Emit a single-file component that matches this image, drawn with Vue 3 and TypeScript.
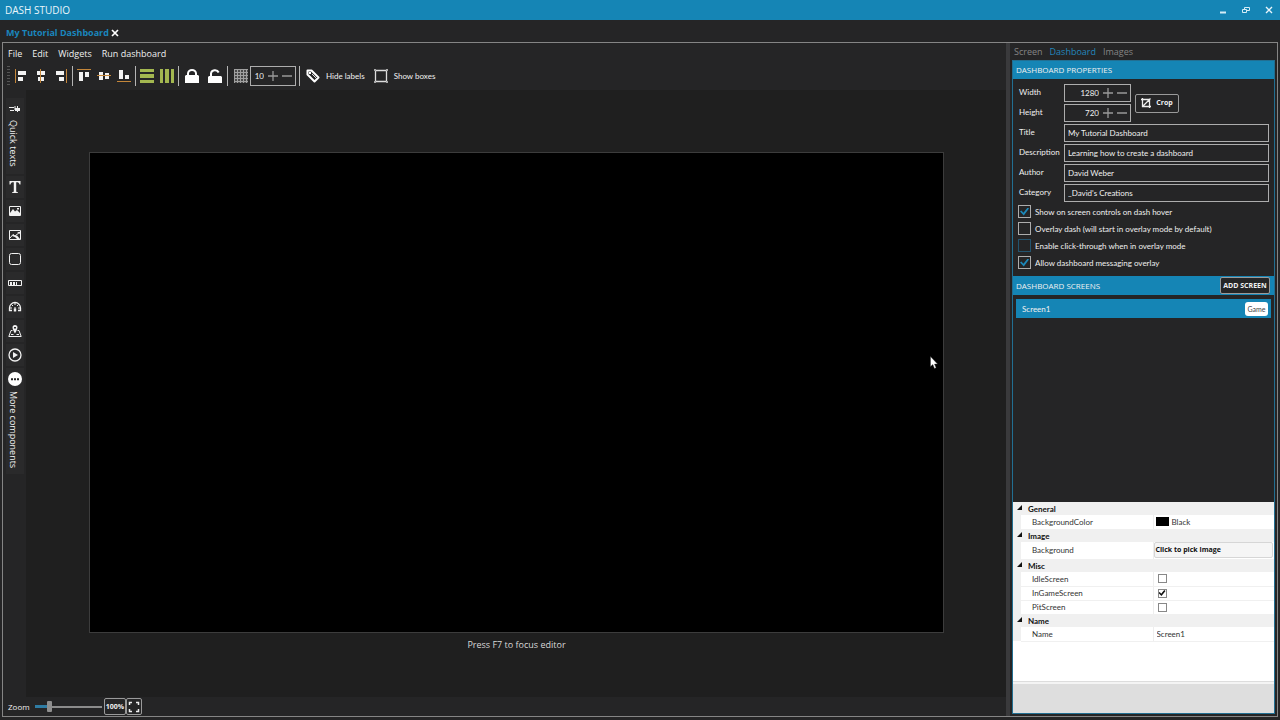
<script setup lang="ts">
import { ref } from 'vue'

interface Stroke { d: string; fill?: string; stroke?: string; width?: number }
interface Tool { label: string; shapes: Stroke[] }

const W = '#f2f2f2'
const O = '#c4863a'
const G = '#a3b750'

const alignGroups: Tool[][] = [
  [
    { label: 'Align left', shapes: [{ d: 'M1.5 0V14', stroke: O }, { d: 'M4 2h8v4H4zM4 8h5v4H4z', fill: W }] },
    { label: 'Align center', shapes: [{ d: 'M3 2h8v4H3zM4 8h6v4H4z', fill: W }, { d: 'M6.500 0V14', stroke: O }] },
    { label: 'Align right', shapes: [{ d: 'M12.5 0V14', stroke: O }, { d: 'M2 2h8v4H2zM5 8h5v4H5z', fill: W }] },
  ],
  [
    { label: 'Align top', shapes: [{ d: 'M0 .5H14', stroke: O }, { d: 'M2 3h4v9H2zM8 3h4v5H8z', fill: W }] },
    { label: 'Align middle', shapes: [{ d: 'M2 3h4v8H2zM8 4h4v6H8z', fill: W }, { d: 'M0 6.500H14', stroke: O }] },
    { label: 'Align bottom', shapes: [{ d: 'M0 12.5H14', stroke: O }, { d: 'M2 1h4v9H2zM8 6h4v4H8z', fill: W }] },
  ],
  [
    { label: 'Distribute vertically', shapes: [{ d: 'M0 0h14v3H0zM0 5h14v4H0zM0 11h14v3H0z', fill: G }] },
    { label: 'Distribute horizontally', shapes: [{ d: 'M0 0h3v14H0zM5 0h4v14H5zM11 0h3v14h-3z', fill: G }] },
  ],
  [
    { label: 'Lock', shapes: [{ d: 'M1 6h12l1 1v7H0V7z', fill: '#fff' }, { d: 'M3 7V4.600a4 3.600 0 0 1 8 0V7', stroke: '#fff', width: 2 }] },
    { label: 'Unlock', shapes: [{ d: 'M1 7h12l1 1v6H0V8z', fill: '#fff' }, { d: 'M3 5.500V4.500a4 3.500 0 0 1 7.700-1', stroke: '#fff', width: 2 }, { d: 'M3 4v4', stroke: '#fff', width: 2 }] },
  ],
]

const components: Tool[] = [
  { label: 'Text', shapes: [{ d: 'M1.5 1H12.500v3.500h-1c-.3-1.700-.9-2.200-3.300-2.200V11c0 1 .4 1.200 1.800 1.300v.7H4v-.7c1.400-.1 1.800-.3 1.800-1.300V2.300C3.400 2.300 2.800 2.800 2.500 4.500h-1z', fill: W }] },
  { label: 'Picture', shapes: [{ d: 'M1.500 2.500h11v9h-11z', stroke: W }, { d: 'M2 10.500V9l3-4 2 2.500L9 6l3 3v2H2zM9 4h2v1.500H9z', fill: W }] },
  { label: 'Dynamic picture', shapes: [{ d: 'M1.500 2.500h11v9h-11z', stroke: W }, { d: 'M2 10l3-3.500 2 1.500 5-4', stroke: W }, { d: 'M4 8l1-1.500L7 8l2-.5 3 3.500H9L7 9zM9 4h3v2z', fill: W }] },
  { label: 'Rectangle', shapes: [{ d: 'M3.500 1.500h7q2 0 2 2v7q0 2-2 2h-7q-2 0-2-2v-7q0-2 2-2z', stroke: W }] },
  { label: 'Linear gauge', shapes: [{ d: 'M.5 4.500h13v5H.5z', stroke: W }, { d: 'M2 6h2v3H2zM5 6h2v3H5zM8 6h1v3H8z', fill: W }] },
  { label: 'Dial gauge', shapes: [{ d: 'M4 10.500H1.500V8a5.500 5.500 0 0 1 11 0v2.500H10', stroke: W, width: 1.3 }, { d: 'M2 8h2M3.500 4.500L5 6M7 3v2M10.500 4.500L9 6M12 8h-2M7 7v3', stroke: W }, { d: 'M5.800 8.500h2.400v3H5.800z', fill: W }] },
  { label: 'Map', shapes: [{ d: 'M4.500 6.500H3L.8 12.500h12.400L11 6.500H9.500M3 10.500h2.500M8.500 10.500h2.500', stroke: W }, { d: 'M7 1a2.500 2.500 0 0 1 2.500 2.500C9.500 5.500 7 9.500 7 9.500S4.500 5.500 4.500 3.500A2.500 2.500 0 0 1 7 1zM6 3v1.500h2V3z', fill: W }] },
  { label: 'Video', shapes: [{ d: 'M7 1a6 6 0 1 1 0 12A6 6 0 1 1 7 1z', stroke: W, width: 1.3 }, { d: 'M5 4l5 3-5 3z', fill: W }] },
]

const menus = ['File', 'Edit', 'Widgets', 'Run dashboard']
const tabs = ['Screen', 'Dashboard', 'Images']
const activeTab = ref('Dashboard')
const gridSize = ref('10')
const zoom = ref(20)

const sizes = ref([
  { id: 'width', label: 'Width', value: '1280' },
  { id: 'height', label: 'Height', value: '720' },
])
const fields = ref([
  { id: 'title', label: 'Title', value: 'My Tutorial Dashboard' },
  { id: 'description', label: 'Description', value: 'Learning how to create a dashboard' },
  { id: 'author', label: 'Author', value: 'David Weber' },
  { id: 'category', label: 'Category', value: "_David's Creations" },
])
const options = ref([
  { label: 'Show on screen controls on dash hover', on: true, dim: false },
  { label: 'Overlay dash (will start in overlay mode by default)', on: false, dim: false },
  { label: 'Enable click-through when in overlay mode', on: false, dim: true },
  { label: 'Allow dashboard messaging overlay', on: true, dim: false },
])

const groups = ref([
  { name: 'General', rows: [{ name: 'BackgroundColor', kind: 'color', value: 'Black', on: false }] },
  { name: 'Image', rows: [{ name: 'Background', kind: 'pick', value: 'Click to pick image', on: false }] },
  {
    name: 'Misc',
    rows: [
      { name: 'IdleScreen', kind: 'check', value: '', on: false },
      { name: 'InGameScreen', kind: 'check', value: '', on: true },
      { name: 'PitScreen', kind: 'check', value: '', on: false },
    ],
  },
  { name: 'Name', rows: [{ name: 'Name', kind: 'entry', value: 'Screen1', on: false }] },
])
</script>

<template>
  <div class="app">
    <header class="titlebar">
      <h1>DASH STUDIO</h1>
      <div class="window-buttons">
        <button aria-label="Minimize"><svg width="8" height="8" viewBox="0 0 8 8"><path d="M1 6.500h6" stroke="#d5ecf6" stroke-width="2" /></svg></button>
        <button aria-label="Restore"><svg width="8" height="8" viewBox="0 0 8 8" fill="none" stroke="#d5ecf6"><path d="M.5 3.500h4v3h-4zM2.500 3V1.500h5v3H5" /></svg></button>
        <button aria-label="Close"><svg width="8" height="8" viewBox="0 0 8 8"><path d="M1 1l6 6M7 1L1 7" stroke="#e8f5fb" stroke-width="1.400" /></svg></button>
      </div>
    </header>

    <div class="documents">
      <span class="doc-name">My Tutorial Dashboard</span>
      <button aria-label="Close document"><svg width="8" height="8" viewBox="0 0 8 8"><path d="M1 1l6 6M7 1L1 7" stroke="#fff" stroke-width="1.700" /></svg></button>
    </div>

    <main class="frame">
      <section class="editor">
        <nav class="menu"><button v-for="m in menus" :key="m">{{ m }}</button></nav>

        <div class="toolbar">
          <span class="grip"></span>
          <template v-for="(group, i) in alignGroups" :key="i">
            <div class="tool-group" :class="{ wide: i === 3 }">
              <button v-for="t in group" :key="t.label" :aria-label="t.label">
                <svg width="14" height="14" viewBox="0 0 14 14">
                  <path v-for="(s, k) in t.shapes" :key="k" :d="s.d" :fill="s.fill ?? 'none'" :stroke="s.stroke ?? 'none'" :stroke-width="s.width ?? 1" />
                </svg>
              </button>
            </div>
            <i class="sep"></i>
          </template>
          <button class="grid-toggle" aria-label="Grid">
            <svg width="14" height="14" viewBox="0 0 14 14"><path d="M0 0h14v14H0z" fill="#4a4a4a" /><path d="M.5 0v14M3.500 0v14M6.500 0v14M9.500 0v14M12.500 0v14M0 .5h14M0 3.500h14M0 6.500h14M0 9.500h14M0 12.500h14" stroke="#a0a0a0" /></svg>
          </button>
          <div class="spinner small">
            <input v-model="gridSize" aria-label="Grid size" />
            <button aria-label="Increase grid size"><svg width="10" height="10" viewBox="0 0 10 10"><path d="M5 0v10M0 5h10" stroke="#999" stroke-width="1.300" /></svg></button>
            <button aria-label="Decrease grid size"><svg width="10" height="10" viewBox="0 0 10 10"><path d="M0 5h10" stroke="#999" stroke-width="1.500" /></svg></button>
          </div>
          <i class="sep"></i>
          <button class="text-tool">
            <svg width="14" height="14" viewBox="0 0 14 14"><path d="M1.500 1.500h4l7 7-4 4-7-7z" fill="none" stroke="#fff" stroke-width="2" stroke-linejoin="round" /><path d="M6 5l4 4" stroke="#ddd" /><path d="M3 3h2v2H3z" fill="#fff" /></svg>
            Hide labels
          </button>
          <button class="text-tool">
            <svg width="14" height="14" viewBox="0 0 14 14"><path d="M1.500 1.500h11v11h-11z" fill="none" stroke="#ddd" stroke-width="1.300" /><path d="M0 0h2v2H0zM12 0h2v2h-2zM0 12h2v2H0zM12 12h2v2h-2z" fill="#aaa" /></svg>
            Show boxes
          </button>
        </div>

        <div class="workspace">
          <aside class="strip">
            <button class="vertical quick">
              <svg width="12" height="12" viewBox="0 0 12 12"><path d="M0 4.500h5M1 7.500h4M6 3v4M6 7.500h5M8.500 3v6" stroke="#eee" fill="none" /><path d="M6 5h5v3H6z" fill="#eee" /></svg>
              <span>Quick texts</span>
            </button>
            <button v-for="c in components" :key="c.label" class="component" :aria-label="c.label">
              <svg width="14" height="14" viewBox="0 0 14 14">
                <path v-for="(s, k) in c.shapes" :key="k" :d="s.d" :fill="s.fill ?? 'none'" :stroke="s.stroke ?? 'none'" :stroke-width="s.width ?? 1" fill-rule="evenodd" />
              </svg>
            </button>
            <button class="vertical more">
              <svg width="14" height="14" viewBox="0 0 14 14"><circle cx="7" cy="7" r="7" fill="#fff" /><path d="M3 6.200h2v2H3zM6 6.200h2v2H6zM9 6.200h2v2H9z" fill="#222" /></svg>
              <span>More components</span>
            </button>
          </aside>
          <div class="stage">
            <div class="canvas">
              <svg class="pointer" width="9" height="13" viewBox="0 0 9 13"><path d="M.5.500v10l2.300-2 1.700 4 1.600-.8-1.600-3.600h3z" fill="#fff" stroke="#333" stroke-width=".4" /></svg>
            </div>
            <p>Press F7 to focus editor</p>
          </div>
        </div>

        <footer class="status">
          <label for="zoom">Zoom</label>
          <input id="zoom" v-model="zoom" type="range" min="0" max="100" :style="{ '--fill': zoom + '%' }" />
          <button class="outlined">100%</button>
          <button class="outlined" aria-label="Fit to screen"><svg width="12" height="12" viewBox="0 0 12 12"><path d="M1.500 4V1.500H4M8 1.500h2.500V4M10.500 8v2.500H8M4 10.500H1.500V8" fill="none" stroke="#eee" stroke-width="1.500" /></svg></button>
        </footer>
      </section>

      <div class="splitter"></div>

      <section class="side">
        <nav class="tabs">
          <button v-for="t in tabs" :key="t" :class="{ active: t === activeTab }" @click="activeTab = t">{{ t }}</button>
        </nav>
        <div class="panel">
          <h2>DASHBOARD PROPERTIES</h2>
          <form class="properties" @submit.prevent>
            <div class="size-row">
              <div class="sizes">
                <div v-for="s in sizes" :key="s.id" class="field">
                  <label :for="s.id">{{ s.label }}</label>
                  <div class="spinner">
                    <input :id="s.id" v-model="s.value" />
                    <button type="button" :aria-label="'Increase ' + s.label"><svg width="10" height="10" viewBox="0 0 10 10"><path d="M5 0v10M0 5h10" stroke="#999" stroke-width="1.300" /></svg></button>
                    <button type="button" :aria-label="'Decrease ' + s.label"><svg width="10" height="10" viewBox="0 0 10 10"><path d="M0 5h10" stroke="#999" stroke-width="1.500" /></svg></button>
                  </div>
                </div>
              </div>
              <button type="button" class="outlined crop">
                <svg width="10" height="10" viewBox="0 0 10 10"><path d="M1.500 0v8.500H10M0 1.500h8.500V10M2 8l7.500-7.500" fill="none" stroke="#eee" stroke-width="1.300" /></svg>
                Crop
              </button>
            </div>
            <div v-for="f in fields" :key="f.id" class="field">
              <label :for="f.id">{{ f.label }}</label>
              <input :id="f.id" v-model="f.value" class="text" />
            </div>
            <div class="options">
              <label v-for="o in options" :key="o.label">
                <input v-model="o.on" type="checkbox" class="dark-check" :class="{ dim: o.dim }" />{{ o.label }}
              </label>
            </div>
          </form>

          <div class="screens-head">
            <h2>DASHBOARD SCREENS</h2>
            <button class="outlined add">ADD SCREEN</button>
          </div>
          <ul class="screens">
            <li><span>Screen1</span><button>Game</button></li>
          </ul>

          <div class="inspector">
            <table>
              <colgroup><col class="c-gutter" /><col class="c-key" /><col /></colgroup>
              <tbody v-for="g in groups" :key="g.name">
                <tr class="group">
                  <th class="gutter"><svg width="5" height="5" viewBox="0 0 5 5"><path d="M5 0v5H0z" fill="#111" /></svg></th>
                  <th colspan="2">{{ g.name }}</th>
                </tr>
                <tr v-for="r in g.rows" :key="r.name" :class="r.kind">
                  <td class="gutter"></td>
                  <td class="key"><label :for="'p-' + r.name">{{ r.name }}</label></td>
                  <td class="value">
                    <span v-if="r.kind === 'color'" class="swatch-value"><i class="swatch"></i>{{ r.value }}</span>
                    <button v-else-if="r.kind === 'pick'" :id="'p-' + r.name">{{ r.value }}</button>
                    <input v-else-if="r.kind === 'check'" :id="'p-' + r.name" v-model="r.on" type="checkbox" class="light-check" />
                    <input v-else :id="'p-' + r.name" v-model="r.value" class="plain" />
                  </td>
                </tr>
              </tbody>
            </table>
          </div>
          <div class="help"></div>
        </div>
      </section>
    </main>
  </div>
</template>

<style>
html, body { background: #252526; }
</style>

<style scoped>
* { box-sizing: border-box; }
.app {
  height: 100vh;
  display: flex;
  flex-direction: column;
  background: #252526;
  color: #f0f0f0;
  font: 8px/12px Lato, "Open Sans", sans-serif;
}
button, input { font: inherit; color: inherit; background: none; border: 0; padding: 0; margin: 0; border-radius: 0; min-width: 0; outline: 0; }
button { display: inline-flex; align-items: center; justify-content: center; white-space: nowrap; }
h1, h2, p, ul { margin: 0; padding: 0; font-weight: 400; list-style: none; }
svg { display: block; flex: none; }
.titlebar, .documents, .menu, .tabs, .stage, .strip, h2 { font-family: "Open Sans", "Noto Sans", sans-serif; }

.titlebar { height: 20px; flex: none; display: flex; align-items: center; justify-content: space-between; padding: 0 7px 0 5px; background: #1585b5; }
.titlebar h1 { font-size: 10px; color: #eaf6fb; }
.window-buttons { display: flex; gap: 15px; }
.documents { height: 22px; flex: none; display: flex; align-items: center; gap: 2px; padding: 3px 6px 0; }
.doc-name { font-size: 9px; font-weight: 700; color: #1a86bd; }

.frame { flex: 1; min-height: 0; display: flex; margin: 0 2px 3px; border: 1px solid #858585; }
.editor { flex: 1; min-width: 0; display: flex; flex-direction: column; }
.menu { height: 21px; flex: none; display: flex; align-items: center; gap: 10px; padding-left: 5px; font-size: 9px; }
.toolbar { height: 26px; flex: none; display: flex; align-items: center; padding: 0 0 2px 4px; }
.grip { width: 3px; height: 20px; margin-right: 4px; background: repeating-linear-gradient(#555 0 1px, transparent 1px 3px); }
.tool-group { display: flex; gap: 6px; margin: 0 4px; }
.tool-group.wide { gap: 9px; margin: 0 5px 0 6px; }
.tool-group:first-of-type { margin-left: 0; }
.sep { width: 1px; height: 20px; background: #b5b5b5; }
.grid-toggle { margin: 0 2px 0 6px; }
.spinner { display: flex; align-items: center; gap: 4px; width: 67px; height: 18px; padding-right: 3px; border: 1px solid #adadad; }
.spinner input { flex: 1; width: 0; text-align: right; }
.spinner.small { width: 46px; height: 20px; margin-right: 3px; }
.text-tool { gap: 6px; margin-left: 6px; margin-right: 3px; }

.workspace { flex: 1; min-height: 0; display: flex; }
.strip { width: 23px; flex: none; display: flex; flex-direction: column; gap: 2px; padding: 8px 2px 0 3px; }
.strip button { background: #2a2a2b; }
.vertical { flex-direction: column; justify-content: flex-start; gap: 5px; }
.vertical span { writing-mode: vertical-rl; font-size: 9px; line-height: 12px; margin-right: 4px; }
.quick { height: 76px; padding-top: 5px; }
.component { height: 22px; }
.more { height: 106px; padding-top: 4px; }
.stage { flex: 1; display: flex; flex-direction: column; align-items: center; padding: 62px 62px 0 63px; background: #1f1f1f; }
.canvas { position: relative; width: 100%; aspect-ratio: 855 / 481; background: #000; border: 1px solid #3c3c3c; }
.pointer { position: absolute; left: 98.500%; top: 42.300%; }
.stage p { margin-top: 5px; font-size: 9px; line-height: 14px; color: #d8d8d8; }

.status { height: 19px; flex: none; display: flex; align-items: center; padding-left: 5px; }
.status label { width: 26px; font-family: "Open Sans", sans-serif; }
.status input { appearance: none; width: 67px; height: 12px; margin: 0 2px 0 1px; background: linear-gradient(#2f7ca3, #2f7ca3) left center / var(--fill) 3px no-repeat, linear-gradient(#8c8c8c, #8c8c8c) center / 100% 2px no-repeat; }
.status input::-webkit-slider-thumb { appearance: none; width: 5px; height: 11px; background: #8f8f8f; border-radius: 1px; }
.outlined { border: 1px solid #9a9a9a; border-radius: 2px; font-weight: 700; font-family: "Open Sans", sans-serif; }
.status .outlined { height: 17px; width: 22px; font-size: 7px; }
.status .outlined:last-child { width: 16px; }

.splitter { width: 4px; flex: none; background: #3a3a3c; }
.side { width: 267px; flex: none; display: flex; flex-direction: column; padding: 0 2px 2px; }
.tabs { height: 17px; flex: none; display: flex; align-items: center; gap: 7px; padding-left: 2px; font-size: 9px; color: #848484; }
.tabs .active { color: #2387bd; }
.panel { flex: 1; min-height: 0; display: flex; flex-direction: column; border: 1px solid #226f92; }
h2 { font-size: 8px; line-height: 18px; padding-left: 3px; background: #1585b5; }
.properties { padding: 5px 5px 7px; display: flex; flex-direction: column; gap: 2px; }
.size-row { display: flex; align-items: center; gap: 4px; }
.sizes { display: flex; flex-direction: column; gap: 2px; }
.field { display: flex; height: 18px; }
.field label { width: 46px; flex: none; line-height: 16px; padding-left: 1px; }
.text { flex: 1; border: 1px solid #adadad; padding: 0 3px; }
.crop { width: 44px; height: 19px; gap: 5px; font-size: 7px; }
.options { display: flex; flex-direction: column; gap: 4px; padding-top: 1px; }
.options label { display: flex; align-items: center; gap: 4px; height: 13px; }
.dark-check { appearance: none; width: 13px; height: 13px; border: 1px solid #adadad; display: grid; place-items: center; }
.dark-check.dim { border-color: #23546f; }
.dark-check:checked::after { content: ""; width: 9px; height: 8px; background: #1c88ba; clip-path: polygon(0 50%, 15% 38%, 38% 65%, 85% 0, 100% 12%, 42% 100%); }
.screens-head { display: flex; align-items: center; justify-content: space-between; height: 19px; padding-right: 4px; background: #1585b5; }
.add { width: 50px; height: 17px; background: #252526; font-size: 7px; }
.screens { flex: 1; padding: 4px 3px 0; }
.screens li { display: flex; align-items: center; justify-content: space-between; height: 19px; padding: 0 3px 0 6px; background: #1585b5; }
.screens button { width: 23px; height: 14px; background: #fff; color: #444; border-radius: 3px; font-size: 7px; }

.inspector { height: 180px; flex: none; background: #fff; color: #333; border-bottom: 1px solid #ddd; }
.help { height: 31px; flex: none; background: #dedede; border-top: 2px solid #f4f4f4; }
table { width: 100%; border-collapse: collapse; table-layout: fixed; line-height: 10px; }
.c-gutter { width: 8px; }
.c-key { width: 132px; }
th, td { padding: 0; height: 14px; text-align: left; vertical-align: middle; }
.group th { height: 13px; background: #f0f0f0; color: #111; padding-left: 7px; }
.gutter, .group .gutter { padding-left: 4px; background: #f0f0f0; }
.group .gutter svg { margin-bottom: 2px; }
.key { padding-left: 11px; border-right: 1px solid #eee; border-bottom: 1px solid #f0f0f0; }
.value { border-bottom: 1px solid #f0f0f0; padding-left: 2px; }
.pick td { height: 17px; }
.pick .value { padding: 0 1px 0 0; }
.pick button { width: 100%; height: 16px; justify-content: flex-start; padding-left: 1px; border: 1px solid #d6d6d6; border-radius: 2px; background: #f5f5f5; color: #111; font-family: "Open Sans", sans-serif; font-size: 7px; font-weight: 700; vertical-align: top; }
.swatch-value { display: flex; align-items: center; gap: 3px; }
.swatch { width: 13px; height: 9px; background: #000; }
.light-check { appearance: none; display: grid; place-items: center; width: 9px; height: 9px; margin-left: 2px; border: 1px solid #888; }
.light-check:checked::after { content: ""; width: 7px; height: 6px; background: #111; clip-path: polygon(0 50%, 18% 35%, 38% 62%, 82% 0, 100% 15%, 42% 100%); }
.plain { display: block; width: 100%; padding-left: 1px; }
</style>
